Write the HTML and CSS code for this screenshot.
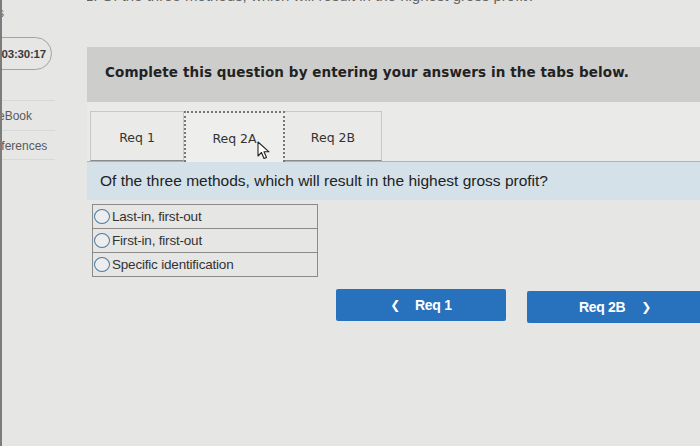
FILE: index.html
```html
<!DOCTYPE html>
<html>
<head>
<meta charset="utf-8">
<link rel="stylesheet" href="styles.css">
</head>
<body>
<div class="page">
  <aside class="side">
    <div class="side-s">s</div>
    <div class="timer">03:30:17</div>
    <div class="side-link side-ebook">eBook</div>
    <div class="side-link side-ref">References</div>
  </aside>
  <main class="main">
    <div class="top-cut"><span>2. Of the three methods, which will result in the highest gross profit?</span></div>
    <div class="header">Complete this question by entering your answers in the tabs below.</div>
    <div class="tabs">
      <div class="tab">Req 1</div>
      <div class="tab active">Req 2A
        <svg class="cursor" width="14" height="19" viewBox="0 0 14 19"><path d="M1 1 L1 15 L4.5 11.5 L7 17.5 L9.5 16.5 L7 10.8 L12 10.8 Z" fill="#fff" stroke="#222" stroke-width="1.1" stroke-linejoin="round"/></svg>
      </div>
      <div class="tab">Req 2B</div>
    </div>
    <div class="question">Of the three methods, which will result in the highest gross profit?</div>
    <div class="options">
      <label class="opt"><span class="radio"></span>Last-in, first-out</label>
      <label class="opt"><span class="radio"></span>First-in, first-out</label>
      <label class="opt"><span class="radio"></span>Specific identification</label>
    </div>
    <div class="nav">
      <button class="btn btn-prev"><span class="chev">&#10094;</span>Req 1</button>
      <button class="btn btn-next">Req 2B<span class="chev">&#10095;</span></button>
    </div>
  </main>
</div>
</body>
</html>
```

FILE: styles.css
```css
html, body {
  margin: 0;
  padding: 0;
  height: 100%;
  overflow: hidden;
}
body {
  background: #e6e6e5;
  font-family: "Liberation Sans", Arial, sans-serif;
  color: #222;
}
.page {
  display: flex;
  height: 446px;
  border-left: 2px solid #7c7c7c;
  box-sizing: border-box;
}
.side {
  width: 85px;
  flex: none;
  overflow: hidden;
}
.side-s {
  font-size: 12px;
  color: #666;
  height: 8px;
  line-height: 8px;
  margin-top: 9px;
  margin-left: -4px;
}
.timer {
  margin-top: 20px;
  margin-left: -22px;
  width: 72px;
  height: 33px;
  box-sizing: border-box;
  border: 1px solid #a3a3a3;
  border-radius: 17px;
  display: flex;
  align-items: center;
  justify-content: flex-end;
  padding-right: 5px;
  font-family: "Liberation Sans", Arial, sans-serif;
  font-weight: bold;
  font-size: 11.5px;
  color: #3a3a3a;
  letter-spacing: -0.2px;
}
.side-link {
  width: 53px;
  height: 30px;
  box-sizing: border-box;
  border-top: 1px solid #d8d8d8;
  font-size: 12px;
  color: #5a5a5a;
  line-height: 30px;
  white-space: nowrap;
}
.side-ebook {
  margin-top: 30px;
  text-indent: -4px;
}
.side-ref {
  text-indent: -16px;
  border-bottom: 1px solid #d8d8d8;
}
.main {
  flex: 1;
  min-width: 0;
}
.top-cut {
  height: 47px;
  overflow: hidden;
  font-size: 15px;
  color: #666;
  white-space: nowrap;
}
.top-cut span {
  display: block;
  margin-top: -13px;
  margin-left: -2px;
}
.header {
  height: 55px;
  box-sizing: border-box;
  padding: 0 0 5px 18px;
  background: #cdcdcc;
  display: flex;
  align-items: center;
  font-family: "DejaVu Sans", Verdana, sans-serif;
  font-weight: bold;
  font-size: 13.5px;
  color: #222;
  letter-spacing: 0.1px;
}
.tabs {
  display: flex;
  background: #eaeae9;
  padding: 9px 0 0 3px;
  height: 60px;
  box-sizing: border-box;
  border-bottom: 1px solid #a9b3b8;
}
.tab {
  position: relative;
  width: 94px;
  height: 50px;
  box-sizing: border-box;
  border: 1px solid #c8c8c8;
  border-bottom: 1px solid #8a8a8a;
  display: flex;
  align-items: center;
  justify-content: center;
  font-family: "DejaVu Sans", Verdana, sans-serif;
  font-size: 12.5px;
  color: #333;
  padding-top: 2px;
}
.tab + .tab {
  border-left: none;
}
.tab.active {
  width: 101px;
  border: 2px dotted #777;
  border-bottom: none;
  height: 51px;
  background: #eeeeed;
}
.tab:last-child {
  width: 97px;
}
.cursor {
  position: absolute;
  left: 71px;
  top: 28px;
}
.question {
  height: 38px;
  background: #d4e1e9;
  display: flex;
  align-items: center;
  padding-left: 13px;
  font-size: 15.5px;
  color: #222;
}
.options {
  margin: 4px 0 0 5px;
  width: 224px;
  border: 1px solid #8a8a8a;
  display: flex;
  flex-direction: column;
}
.opt {
  display: flex;
  align-items: center;
  height: 23px;
  font-size: 13.5px;
  color: #333;
  letter-spacing: -0.2px;
}
.opt + .opt {
  border-top: 1px solid #8a8a8a;
}
.radio {
  width: 14px;
  height: 13px;
  border: 1.7px solid #4b79a6;
  border-radius: 50%;
  margin: 0 2px 0 1px;
  background: #ededed;
  flex: none;
}
.nav {
  display: flex;
  gap: 21px;
  margin-top: 12px;
  padding-left: 249px;
}
.btn {
  flex: none;
  height: 32px;
  border: none;
  border-radius: 2px;
  background: #2771bd;
  color: #fff;
  font-family: "Liberation Sans", Arial, sans-serif;
  font-weight: bold;
  font-size: 14px;
  display: flex;
  align-items: center;
  justify-content: center;
  padding: 0;
  letter-spacing: -0.3px;
}
.btn-prev {
  width: 170px;
}
.btn-next {
  width: 178px;
  margin-top: 2px;
  padding-right: 2px;
}
.chev {
  font-size: 12px;
  font-family: "DejaVu Sans", sans-serif;
}
.btn-prev .chev {
  margin-right: 15px;
}
.btn-next .chev {
  margin-left: 16px;
}
```
